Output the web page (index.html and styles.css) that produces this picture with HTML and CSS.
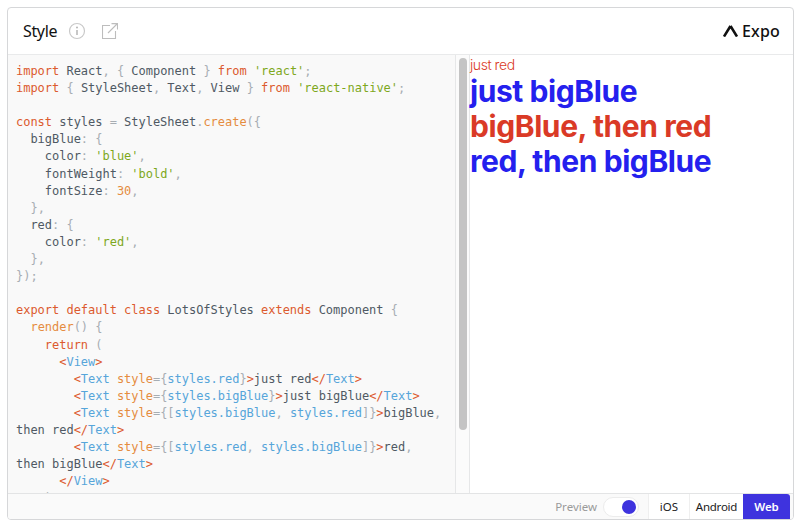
FILE: index.html
```html
<!DOCTYPE html>
<html lang="en">
<head>
<meta charset="utf-8">
<title>Style</title>
<link rel="stylesheet" href="styles.css">
</head>
<body>
<main class="card">
  <header class="head">
    <h1 class="title">Style</h1>
    <svg class="info" width="18" height="18" viewBox="0 0 18 18" fill="none"><circle cx="9" cy="9" r="7.5" stroke="#c9c9c9" stroke-width="1.2"/><circle cx="9" cy="5.6" r="1" fill="#b5b5b5"/><path d="M9 8v5" stroke="#b5b5b5" stroke-width="1.5"/></svg>
    <svg class="ext" width="16" height="16" viewBox="0 0 16 16" fill="none" stroke="#bdbdbd" stroke-width="1.1"><path d="M8 2.5H.5V15.5H13.5V8"/><path d="M6 10L15 1M9.5 .6h6v6"/></svg>
    <div class="brand">
      <svg width="15" height="12" viewBox="0 0 15 12"><path d="M7.5 1L1 11.5M7.5 1L14 11.5" stroke="#111" stroke-width="2.6" fill="none"/></svg>
      <span class="brand-name">Expo</span>
    </div>
  </header>
  <div class="body">
    <div class="code-pane">
<pre class="code"><span class="k">import</span> React<span class="p">,</span> <span class="p">{</span> Component <span class="p">}</span> <span class="k">from</span> <span class="s">'react'</span><span class="p">;</span>
<span class="k">import</span> <span class="p">{</span> StyleSheet<span class="p">,</span> Text<span class="p">,</span> View <span class="p">}</span> <span class="k">from</span> <span class="s">'react-native'</span><span class="p">;</span>

<span class="k">const</span> styles <span class="p">=</span> StyleSheet<span class="p">.</span><span class="m">create</span><span class="p">({</span>
  bigBlue<span class="p">:</span> <span class="p">{</span>
    color<span class="p">:</span> <span class="s">'blue'</span><span class="p">,</span>
    fontWeight<span class="p">:</span> <span class="s">'bold'</span><span class="p">,</span>
    fontSize<span class="p">:</span> <span class="m">30</span><span class="p">,</span>
  <span class="p">},</span>
  red<span class="p">:</span> <span class="p">{</span>
    color<span class="p">:</span> <span class="s">'red'</span><span class="p">,</span>
  <span class="p">},</span>
<span class="p">});</span>

<span class="k">export</span> <span class="k">default</span> <span class="k">class</span> LotsOfStyles <span class="k">extends</span> Component <span class="p">{</span>
  <span class="m">render</span><span class="p">()</span> <span class="p">{</span>
    <span class="k">return</span> <span class="p">(</span>
      <span class="k">&lt;</span><span class="t">View</span><span class="k">&gt;</span>
        <span class="k">&lt;</span><span class="t">Text</span> <span class="m">style</span><span class="p">={</span><span class="t">styles.red</span><span class="p">}</span><span class="k">&gt;</span>just red<span class="k">&lt;/</span><span class="t">Text</span><span class="k">&gt;</span>
        <span class="k">&lt;</span><span class="t">Text</span> <span class="m">style</span><span class="p">={</span><span class="t">styles.bigBlue</span><span class="p">}</span><span class="k">&gt;</span>just bigBlue<span class="k">&lt;/</span><span class="t">Text</span><span class="k">&gt;</span>
        <span class="k">&lt;</span><span class="t">Text</span> <span class="m">style</span><span class="p">={[</span><span class="t">styles.bigBlue</span><span class="p">,</span> <span class="t">styles.red</span><span class="p">]}</span><span class="k">&gt;</span>bigBlue<span class="p">,</span>
then red<span class="k">&lt;/</span><span class="t">Text</span><span class="k">&gt;</span>
        <span class="k">&lt;</span><span class="t">Text</span> <span class="m">style</span><span class="p">={[</span><span class="t">styles.red</span><span class="p">,</span> <span class="t">styles.bigBlue</span><span class="p">]}</span><span class="k">&gt;</span>red<span class="p">,</span>
then bigBlue<span class="k">&lt;/</span><span class="t">Text</span><span class="k">&gt;</span>
      <span class="k">&lt;/</span><span class="t">View</span><span class="k">&gt;</span>
    <span class="p">);</span>
  <span class="p">}</span>
<span class="p">}</span></pre>
    </div>
    <div class="gutter"><div class="thumb"></div></div>
    <section class="preview">
      <div class="small red">just red</div>
      <div class="big blue">just bigBlue</div>
      <div class="big red">bigBlue, then red</div>
      <div class="big blue">red, then bigBlue</div>
    </section>
  </div>
  <footer class="foot">
    <span class="label">Preview</span>
    <div class="toggle"><div class="knob"></div></div>
    <div class="tabs">
      <button class="tab tab-ios">iOS</button>
      <button class="tab tab-android">Android</button>
      <button class="tab tab-web">Web</button>
    </div>
  </footer>
</main>
</body>
</html>
```
FILE: styles.css
```css
* { box-sizing: border-box; }
html, body { margin: 0; padding: 0; background: #fff; }
body { height: 528px; overflow: hidden; padding: 7px 9px 8px 7px; }
.card {
  width: 787px;
  height: 513px;
  border: 1px solid #d6d7d9;
  border-radius: 4px;
  display: flex;
  flex-direction: column;
  overflow: hidden;
  background: #fff;
}
.head {
  height: 47px;
  flex: none;
  display: flex;
  align-items: center;
  padding: 0 13px 0 15px;
  border-bottom: 1px solid #e9eaeb;
}
.title {
  margin: 0;
  font: 400 16px/20px "Noto Sans", sans-serif;
  letter-spacing: -0.35px;
  color: #111;
  width: 45px;
}
.ext { margin-left: 16px; }
.brand {
  margin-left: auto;
  display: flex;
  align-items: center;
  gap: 4px;
  font: 500 16px/20px "Noto Sans", sans-serif;
  color: #111;
}
.brand-name { letter-spacing: 0.2px; }
.body { flex: 1; min-height: 0; display: flex; }
.code-pane {
  width: 448px;
  flex: none;
  background: #f9f9f9;
  border-right: 1px solid #e6e7e8;
  overflow: hidden;
  padding: 8px 8px 0 8px;
}
.code {
  margin: 0;
  font: 12px/17.1px "DejaVu Sans Mono", monospace;
  letter-spacing: -0.02px;
  color: #4f5964;
  white-space: pre;
}
.k { color: #dc5a2e; }
.s { color: #7ea81c; }
.m { color: #e58c3f; }
.p { color: #a7adb3; }
.t { color: #56a5da; }
.gutter {
  width: 14px;
  flex: none;
  background: #fbfbfb;
  border-right: 1px solid #e6e7e8;
  padding: 3px 2px 0 3px;
}
.thumb { width: 8px; height: 372px; border-radius: 4px; background: #c4c4c4; }
.preview { flex: 1; background: #fff; font-family: Inter, sans-serif; padding-top: 2px; }
.small { font-size: 14px; line-height: 16px; letter-spacing: -0.45px; font-weight: 300; margin-bottom: 1px; }
.big { font-size: 30px; line-height: 35px; font-weight: 700; letter-spacing: -0.42px; }
.red { color: #da3a26; }
.blue { color: #2420ee; }
.foot {
  height: 26px;
  flex: none;
  display: flex;
  align-items: center;
  justify-content: flex-end;
  padding-right: 3px;
  background: #fafafa;
  border-top: 1px solid #e3e4e5;
}
.label { font: 11.5px/16px "Noto Sans", sans-serif; color: #9a9a9a; margin-right: 6px; }
.toggle {
  width: 36px;
  height: 20px;
  border: 1px solid #ececec;
  border-radius: 10px;
  background: #fff;
  display: flex;
  align-items: center;
  justify-content: flex-end;
  padding-right: 2px;
  margin-right: 9px;
}
.knob { width: 14px; height: 14px; border-radius: 50%; background: #3e33de; }
.tabs { display: flex; height: 100%; align-self: stretch; }
.tab {
  border: 0;
  border-left: 1px solid #efefef;
  background: #fff;
  padding: 0;
  font: 11.5px/16px "Noto Sans", sans-serif;
  color: #222;
}
.tab-ios { width: 41px; }
.tab-android { width: 54px; letter-spacing: -0.25px; }
.tab-web { width: 47px; background: #3e33de; color: #fff; font-weight: 600; letter-spacing: -0.1px; border-left: 0; border-radius: 0 3px 0 0; }
```
